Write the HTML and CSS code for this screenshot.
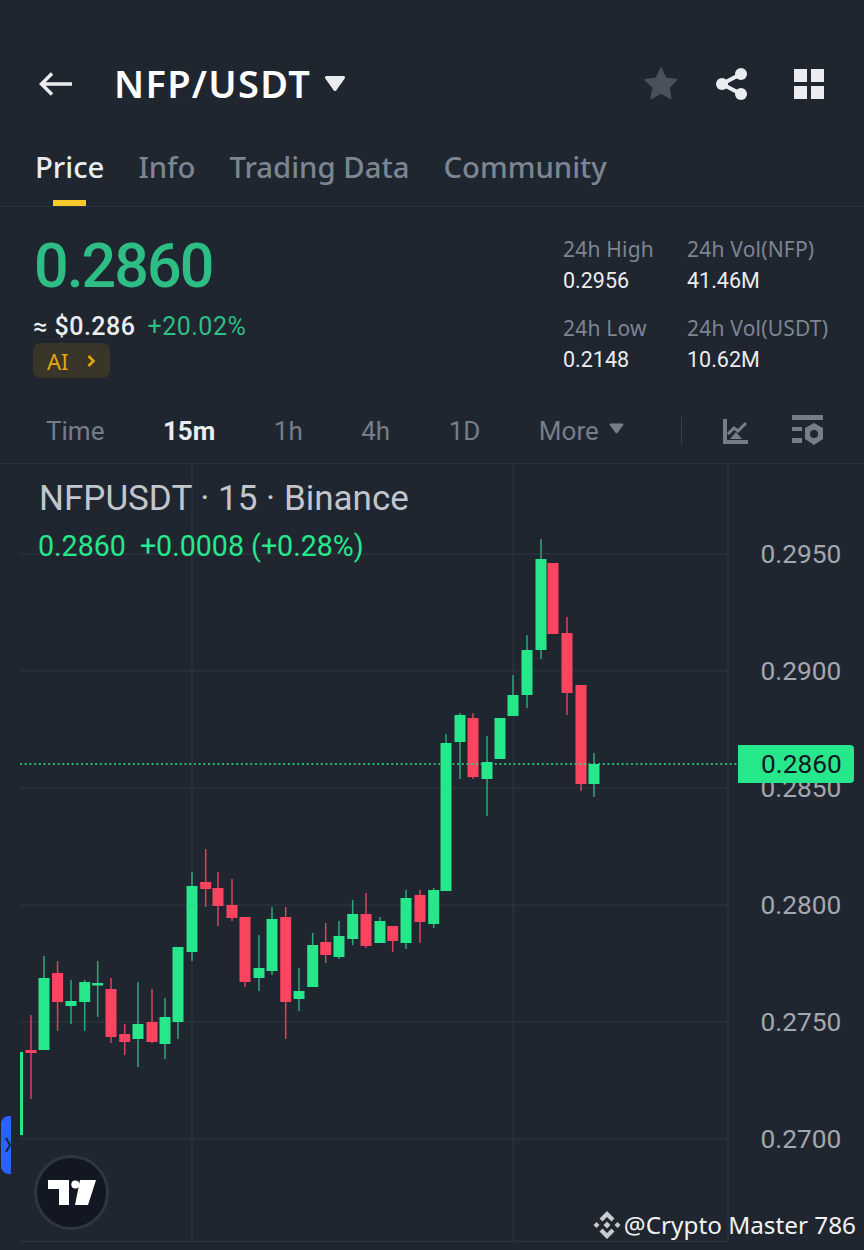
FILE: index.html
```html
<!DOCTYPE html>
<html lang="en">
<head>
    <meta charset="UTF-8">
    <title>NFP/USDT</title>
    <link rel="stylesheet" href="styles.css">
</head>
<body>
    <header class="topbar">
        <svg class="back-icon" width="34" height="26" viewBox="0 0 34 26"><path d="M33 13H3M13 2.500 2.500 13 13 23.500" fill="none" stroke="#eaecef" stroke-width="3.500"/></svg>
        <h1 class="pair">NFP/USDT</h1>
        <svg class="pair-caret" width="22" height="17" viewBox="0 0 22 17"><path d="M2.500 1h17c1.300 0 2 1.400 1.200 2.400l-8.500 12c-.6.800-1.800.8-2.400 0l-8.500-12C.5 2.400 1.200 1 2.500 1z" fill="#eaecef"/></svg>
        <div class="topbar-icons">
            <svg class="star-icon" width="36" height="36" viewBox="0 0 36 36"><path d="M18 2l4.800 10.300 11 1.400-8 7.800 2.100 11.100-9.900-5.400-9.900 5.400 2.100-11.100-8-7.800 11-1.400z" fill="#4a505c" stroke="#4a505c" stroke-width="1.500" stroke-linejoin="round"/></svg>
            <svg class="share-icon" width="36" height="36" viewBox="0 0 36 36"><path d="M27 8 8 18l19 10" fill="none" stroke="#eaecef" stroke-width="4"/><circle cx="27" cy="8" r="6" fill="#eaecef"/><circle cx="8" cy="18" r="6" fill="#eaecef"/><circle cx="27" cy="28" r="6" fill="#eaecef"/></svg>
            <svg width="30" height="30" viewBox="0 0 30 30"><path d="M0 0h13v13H0zM17 0h13v13H17zM0 17h13v13H0zM17 17h13v13H17z" fill="#eaecef"/></svg>
        </div>
    </header>

    <nav class="tabs">
        <a class="tab active">Price</a>
        <a class="tab">Info</a>
        <a class="tab">Trading Data</a>
        <a class="tab">Community</a>
    </nav>

    <section class="stats">
        <div class="stats-main">
            <div class="last-price">0.2860</div>
            <div class="sub-price"><span class="fiat">≈ $0.286</span><span class="change">+20.02%</span></div>
            <div class="ai-badge">AI<svg width="9" height="14" viewBox="0 0 9 14"><path d="M1.500 2l5 5-5 5" fill="none" stroke="#e0a90b" stroke-width="2.500"/></svg></div>
        </div>
        <div class="stats-grid">
            <div class="stat"><span class="stat-label">24h High</span><span class="stat-value">0.2956</span></div>
            <div class="stat"><span class="stat-label">24h Vol(NFP)</span><span class="stat-value">41.46M</span></div>
            <div class="stat"><span class="stat-label">24h Low</span><span class="stat-value">0.2148</span></div>
            <div class="stat"><span class="stat-label">24h Vol(USDT)</span><span class="stat-value">10.62M</span></div>
        </div>
    </section>

    <div class="timeframes">
        <span class="tf">Time</span>
        <span class="tf active">15m</span>
        <span class="tf">1h</span>
        <span class="tf">4h</span>
        <span class="tf">1D</span>
        <span class="tf more">More<svg width="15" height="11" viewBox="0 0 15 11"><path d="M1.500 .5h12c.8 0 1.300.9.800 1.600l-6 7.800c-.4.500-1.200.5-1.600 0l-6-7.800C.2 1.400.7.500 1.500.5z" fill="#767d89"/></svg></span>
        <span class="tf-divider"></span>
        <svg class="tf-icon-a" width="25" height="25" viewBox="0 0 25 25"><path d="M2 0v23H25" fill="none" stroke="#767d89" stroke-width="4"/><path d="M5 15l6-6 4 3 8-8" fill="none" stroke="#767d89" stroke-width="3"/><path d="M7 20l6-7 6 7z" fill="#767d89"/></svg>
        <svg class="tf-icon-b" width="32" height="32" viewBox="0 0 32 32"><path d="M0 0h31v5H0zM0 12h10v4H0zM0 23h10v5H0z" fill="#767d89"/><path d="M22 8l9 5v11l-9 6-9-6V13z" fill="#767d89"/><circle cx="22" cy="19" r="4" fill="#202630"/></svg>
    </div>

    <main class="chart">
        <svg class="chart-canvas" width="864" height="786" viewBox="0 464 864 786">
            <path class="grid" d="M20 554H728M20 671H728M20 788H728M20 905H728M20 1022H728M20 1139H728M20 1241.500H728M192 464V1241M513.500 464V1241M728 464V1241"/>
            <g class="axis">
                <text x="760.500" y="563">0.2950</text>
                <text x="760.500" y="680">0.2900</text>
                <text x="760.500" y="797">0.2850</text>
                <text x="760.500" y="914">0.2800</text>
                <text x="760.500" y="1031">0.2750</text>
                <text x="760.500" y="1148">0.2700</text>
            </g>
            <path class="wick up" d="M21.500 1052V1135M44 956V1050M71 980V1024M84.700 980V1031M97.700 961V1017M138 982V1067M165 998V1059M178 947V1039M192 872V961M259 935V991M272 907V975M299 968V1011M312.700 933V987M339 921V959M352.700 900V945M380 917V943M406 890V949M433.700 888V928M446 734V891M460 713V779M487 736V816M500 718V759M513 675V716M527 635V708M541 539V659M594 753V797"/>
            <path class="wick down" d="M31 1015V1099M57.600 961V1031M111 978V1043M124.700 1024V1055M152 989V1043M205.700 849V907M218 872V926M232 879V921M245 917V987M285.700 907V1039M325.700 923V963M366 893V948M392.700 926V952M420 890V943M473 713V779M553 563V634M567 617V715M581 685V791"/>
            <path class="body up" d="M20 1052h3v83h-3zM38.500 978h11v72h-11zM65.500 1001h11v5h-11zM79.200 982h11v20h-11zM92.200 983h11v2.500h-11zM132.500 1024h11v15h-11zM159.500 1017h11v27h-11zM172.500 947h11v75h-11zM186.500 886h11v66h-11zM253.500 968h11v10h-11zM266.500 919h11v52h-11zM293.500 991h11v8h-11zM307.200 945h11v42h-11zM333.500 936h11v21h-11zM347.200 914h11v25h-11zM374.500 921h11v22h-11zM400.500 898h11v45h-11zM428.200 890h11v34h-11zM440.500 743h11v148h-11zM454.500 715h11v27h-11zM481.500 762h11v17h-11zM494.500 718h11v41h-11zM507.500 695h11v21h-11zM521.500 650h11v45h-11zM535.500 559h11v91h-11zM588.500 764h11v20h-11z"/>
            <path class="body down" d="M25.500 1050h11v3h-11zM52.100 973h11v29h-11zM105.500 989h11v48h-11zM119.200 1034h11v8h-11zM146.500 1022h11v20h-11zM200.200 882h11v7h-11zM212.500 888h11v18h-11zM226.500 905h11v13h-11zM239.500 917h11v65h-11zM280.200 917h11v85h-11zM320.200 942h11v13h-11zM360.500 914h11v32h-11zM387.200 926h11v15h-11zM414.500 895h11v27h-11zM467.500 718h11v59h-11zM547.500 563h11v71h-11zM561.500 633h11v60h-11zM575.500 685h11v99h-11z"/>
            <path class="last-line" d="M20 764H738"/>
        </svg>

        <div class="legend">
            <div class="legend-title">NFPUSDT · 15 · Binance</div>
            <div class="legend-values"><span>0.2860</span><span>+0.0008 (+0.28%)</span></div>
        </div>
        <div class="price-tag">0.2860</div>
        <div class="side-handle"><svg width="6" height="16" viewBox="0 0 6 16"><path d="M1 1l4 7-4 7" fill="none" stroke="#1e2530" stroke-width="2"/></svg></div>
        <div class="tv-logo">
            <svg width="48" height="25" viewBox="0 0 48 25"><path d="M0 0h21v25H11V9H0z" fill="#fff"/><circle cx="27.300" cy="4.500" r="4" fill="#fff"/><path d="M32 0h16L40 25H27z" fill="#fff"/></svg>
        </div>
        <div class="watermark">
            <svg width="28" height="28" viewBox="0 0 28 28"><path d="M14 0l7.500 7.500-3 3L14 6l-4.500 4.500-3-3zM14 22l4.500-4.500 3 3L14 28l-7.500-7.500 3-3zM3.500 11l3 3-3 3-3-3zM24.500 11l3 3-3 3-3-3zM14 10.500l3.500 3.500-3.500 3.500-3.500-3.500z" fill="#c9cacc"/></svg>
            <span>@Crypto Master 786</span>
        </div>
    </main>
</body>
</html>
```

FILE: styles.css
```css
* {
    box-sizing: border-box;
}

body {
    font-family: 'Noto Sans', sans-serif;
    margin: 0;
    width: 864px;
    height: 1250px;
    overflow: hidden;
    background-color: #202630;
    color: #eaecef;
}

.topbar {
    display: flex;
    align-items: center;
    height: 60px;
    margin-top: 54px;
    padding-left: 39px;
}

.pair {
    margin: -2px 0 0 41px;
    font-size: 38px;
    font-weight: 600;
    line-height: 60px;
    letter-spacing: 1.300px;
    color: #ffffff;
}

.pair-caret {
    margin: -2px 0 0 13px;
}

.topbar-icons {
    display: flex;
    align-items: center;
    margin-left: auto;
    padding-right: 40px;
}

.star-icon {
    margin-right: 35px;
}

.share-icon {
    margin-right: 44px;
}

.tabs {
    display: flex;
    gap: 34px;
    padding: 33px 0 0 35px;
    height: 93px;
    border-bottom: 1px solid #2a313b;
}

.tab {
    display: block;
    font-size: 29.300px;
    font-weight: 500;
    line-height: 40px;
    color: #7c8592;
}

.tab.active {
    color: #eaecef;
}

.tab.active::after {
    content: "";
    display: block;
    width: 33px;
    height: 6px;
    margin: 13px auto 0;
    background-color: #f5c92a;
}

.stats {
    display: flex;
    height: 193px;
    padding: 24px 0 0 33px;
}

.last-price {
    padding-left: 1px;
    font-family: 'Roboto', sans-serif;
    font-size: 61px;
    font-weight: 500;
    line-height: 70px;
    letter-spacing: -2px;
    color: #2ebd85;
}

.sub-price {
    display: flex;
    gap: 12px;
    margin-top: 9px;
    font-family: 'Roboto', sans-serif;
    font-size: 25px;
    line-height: 34px;
    letter-spacing: .5px;
}

.fiat {
    font-weight: 500;
    color: #eaecef;
}

.change {
    color: #2ebd85;
}

.ai-badge {
    display: flex;
    align-items: center;
    justify-content: space-between;
    width: 77px;
    height: 35px;
    margin-top: -1px;
    padding: 0 14px;
    border-radius: 8px;
    background-color: #3a3529;
    color: #e0a90b;
    font-size: 22px;
}

.stats-grid {
    display: grid;
    grid-template-columns: 124px auto;
    row-gap: 17px;
    align-content: start;
    width: 301px;
    margin-left: auto;
    padding-top: 3px;
}

.stat {
    display: flex;
    flex-direction: column;
    line-height: 31px;
}

.stat-label {
    font-size: 21px;
    letter-spacing: .2px;
    color: #7c8592;
}

.stat-value {
    font-family: 'Roboto', sans-serif;
    font-size: 21.500px;
    color: #eaecef;
}

.timeframes {
    display: flex;
    align-items: center;
    gap: 58.500px;
    height: 64px;
    padding: 0 0 1px 46px;
    border-bottom: 1px solid #2a313b;
    position: relative;
}

.tf {
    font-family: 'Roboto', sans-serif;
    font-size: 26px;
    line-height: 60px;
    color: #767d89;
}

.tf.active {
    font-weight: 700;
    color: #eaecef;
}

.more {
    display: flex;
    align-items: center;
    gap: 10px;
}

.more svg {
    margin-top: -6px;
}

.tf-divider {
    width: 1px;
    height: 28px;
    margin-left: -1px;
    background-color: #383f4a;
}

.tf-icon-a {
    margin-left: -18px;
}

.tf-icon-b {
    margin-left: -14px;
}

.chart {
    position: relative;
    height: 786px;
}

.chart-canvas {
    display: block;
}

.grid {
    fill: none;
    stroke: #2b323c;
    stroke-width: 1.500;
}

.axis text {
    font-family: 'Roboto', sans-serif;
    font-size: 26.300px;
    fill: #a3a7af;
}

.wick {
    fill: none;
    stroke-width: 1.500;
}

.wick.up {
    stroke: #2aa87a;
}

.wick.down {
    stroke: #d8435d;
}

.body.up {
    fill: #26e88a;
}

.body.down {
    fill: #fb445f;
}

.last-line {
    fill: none;
    stroke: #26e88a;
    stroke-width: 1.500;
    stroke-dasharray: 2 2.700;
}

.legend {
    position: absolute;
    top: 13px;
    left: 38px;
    font-family: 'Roboto', sans-serif;
}

.legend-title {
    padding-left: 1px;
    font-size: 35px;
    line-height: 44px;
    color: #c2c5cb;
}

.legend-values {
    display: flex;
    gap: 14px;
    font-size: 28.600px;
    line-height: 32px;
    margin-top: 9px;
    color: #26e88a;
}

.price-tag {
    position: absolute;
    top: 281px;
    left: 738px;
    width: 116px;
    height: 38px;
    padding-left: 23px;
    border-radius: 0 4px 4px 0;
    background-color: #26e88a;
    color: #131722;
    font-family: 'Roboto', sans-serif;
    font-size: 26.300px;
    line-height: 38px;
}

.side-handle {
    position: absolute;
    top: 652px;
    left: 1px;
    display: flex;
    align-items: center;
    justify-content: flex-end;
    width: 10px;
    height: 58px;
    border-radius: 8px 0 0 8px;
    background-color: #2962ff;
}

.tv-logo {
    position: absolute;
    top: 691px;
    left: 34px;
    display: flex;
    align-items: center;
    justify-content: center;
    width: 75px;
    height: 75px;
    border: 3px solid #303640;
    border-radius: 50%;
    background-color: #131722;
}

.watermark {
    position: absolute;
    top: 744px;
    right: 8px;
    display: flex;
    align-items: center;
    gap: 3px;
    font-size: 24.300px;
    line-height: 34px;
    color: #f2f2f2;
}
```
